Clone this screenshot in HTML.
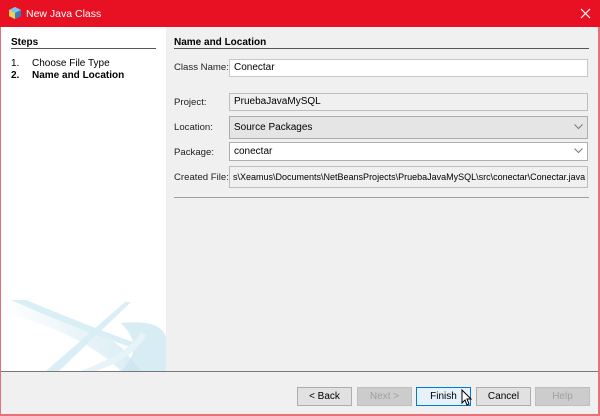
<!DOCTYPE html>
<html><head><style>
body{margin:0;width:600px;height:416px;position:relative;font-family:"Liberation Sans",sans-serif;font-size:10px;color:#000;background:#f0f0f0;overflow:hidden}
.a{position:absolute}
.lbl{position:absolute;left:174px;color:#222;font-size:9.6px}
.fld{position:absolute;left:229px;width:359px;border:1px solid #adadad;box-sizing:border-box;padding-left:4px;line-height:15px}
.btn{position:absolute;top:387px;height:19px;width:55px;border:1px solid #adadad;background:#e1e1e1;box-sizing:border-box;text-align:center;line-height:17px;font-size:10px}
.chev{position:absolute;right:4px;top:4px}
</style></head><body>
<div class="a" style="left:0;top:0;width:600px;height:27px;background:#e81123"></div>
<svg class="a" style="left:8px;top:6px" width="14" height="14" viewBox="0 0 14 14"><polygon points="7,1 13,4 13,10 7,13 1,10 1,4" fill="#e8a33a"/><polygon points="7,1 13,4 7,7 1,4" fill="#7ec3e8"/><polygon points="7,7 13,4 13,10 7,13" fill="#3a7cc4"/><polygon points="1,4 7,7 7,13 1,10" fill="#f0d050"/></svg>
<div class="a" style="left:26px;top:8px;color:#fff;font-size:10.5px">New Java Class</div>
<svg class="a" style="left:580px;top:8px" width="11" height="11"><path d="M1,1L10,10M10,1L1,10" stroke="#fff" stroke-width="1.2"/></svg>
<div class="a" style="left:0;top:27px;width:1px;height:389px;background:#e8707a"></div>
<div class="a" style="left:598px;top:27px;width:2px;height:389px;background:#e8707a"></div>
<div class="a" style="left:0;top:414px;width:600px;height:2px;background:#e8707a"></div>
<div class="a" style="left:1px;top:27px;width:165px;height:344px;background:#fff;overflow:hidden">
<svg width="165" height="344"><defs><linearGradient id="g" x1="0" x2="1"><stop offset="0" stop-color="#fff"/><stop offset="1" stop-color="#bfe0ec"/></linearGradient></defs>
<path d="M0,270 Q80,290 120,320 L140,344 L120,344 Q80,305 0,285Z" fill="url(#g)" opacity=".6"/>
<path d="M10,273 L25,273 Q90,300 140,318 L135,322 Q70,300 10,273Z" fill="#daeef5"/>
<path d="M130,275 L124,275 L45,344 L58,344Z" fill="#daeef5"/>
<path d="M120,296 Q160,292 165,310 L165,344 L120,344 Q145,320 120,296Z" fill="#c8e4ee" opacity=".7"/>
<path d="M80,344 Q130,325 140,305 L145,308 Q135,330 95,344Z" fill="#e6f3f8"/>
</svg></div>
<div class="a" style="left:11px;top:37px;font-weight:bold">Steps</div>
<div class="a" style="left:11px;top:48px;width:145px;height:1px;background:#555"></div>
<div class="a" style="left:11px;top:58px">1.</div><div class="a" style="left:32px;top:58px">Choose File Type</div>
<div class="a" style="left:11px;top:70px;font-weight:bold">2.</div><div class="a" style="left:32px;top:70px;font-weight:bold">Name and Location</div>
<div class="a" style="left:174px;top:37px;font-weight:bold">Name and Location</div>
<div class="a" style="left:174px;top:48px;width:415px;height:1px;background:#555"></div>
<div class="lbl" style="top:62px">Class Name:</div>
<div class="fld" style="top:59px;height:18px;background:#fff;border-color:#c8c8c8;line-height:16px">Conectar</div>
<div class="lbl" style="top:97px">Project:</div>
<div class="fld" style="top:93px;height:18px;background:#f0f0f0;border-color:#bdbdbd;line-height:16px">PruebaJavaMySQL</div>
<div class="lbl" style="top:122px">Location:</div>
<div class="fld" style="top:116px;height:23px;background:#e5e5e5;line-height:21px">Source Packages<svg class="chev" style="top:7px" width="9" height="6"><path d="M0.5,0.5L4.5,4.5L8.5,0.5" fill="none" stroke="#777"/></svg></div>
<div class="lbl" style="top:147px">Package:</div>
<div class="fld" style="top:142px;height:19px;background:#fff;line-height:17px">conectar<svg class="chev" style="top:5px" width="9" height="6"><path d="M0.5,0.5L4.5,4.5L8.5,0.5" fill="none" stroke="#777"/></svg></div>
<div class="lbl" style="top:172px">Created File:</div>
<div class="fld" style="top:166px;height:22px;background:#f0f0f0;line-height:20px;padding-left:3px;white-space:nowrap;overflow:hidden;border-color:#bdbdbd;font-size:9px">s\Xeamus\Documents\NetBeansProjects\PruebaJavaMySQL\src\conectar\Conectar.java</div>
<div class="a" style="left:174px;top:197px;width:415px;height:1px;background:#a0a0a0"></div>
<div class="a" style="left:1px;top:371px;width:597px;height:1px;background:#777"></div>
<div class="btn" style="left:297px">&lt; Back</div>
<div class="btn" style="left:357px;color:#a0a0a0;background:#ccc;border-color:#bfbfbf">Next &gt;</div>
<div class="btn" style="left:416px;background:#e5f1fb;border-color:#0078d7">Finish</div>
<div class="btn" style="left:476px">Cancel</div>
<div class="btn" style="left:535px;color:#a0a0a0;background:#ccc;border-color:#bfbfbf">Help</div>
<svg class="a" style="left:461px;top:389px" width="12" height="18" viewBox="0 0 12 18"><path d="M1,1 L1,14 L4,11 L6,16 L8,15 L6,10 L10,10Z" fill="#fff" stroke="#000" stroke-width="1"/></svg>
</body></html>
